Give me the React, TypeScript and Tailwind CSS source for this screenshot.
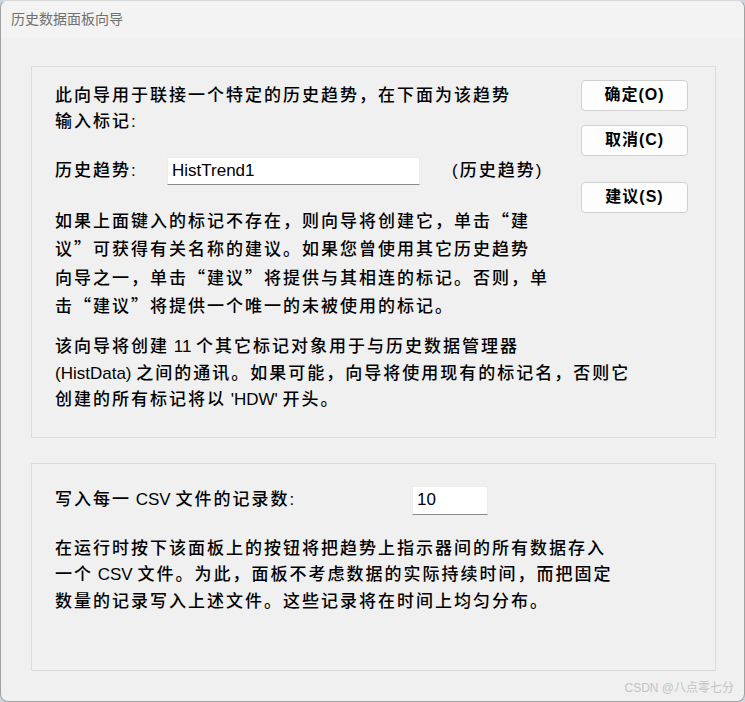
import type { ReactNode } from 'react'

const font = "font-['Liberation_Sans','Noto_Sans_CJK_SC',sans-serif]"

// latin runs sit tighter than the CJK glyphs around them
function L({ children }: { children: ReactNode }) {
  return <span className="tracking-[0px]">{children}</span>
}

// full-width quote marks come from the CJK face
function Q({ children }: { children: ReactNode }) {
  return <span className="font-['Noto_Sans_CJK_SC',sans-serif]">{children}</span>
}

function DlgButton({ label, className = '' }: { label: string; className?: string }) {
  return (
    <button
      className={`w-[107px] h-[31px] rounded-[4px] border border-[#d0d0d0] bg-[#fdfdfd] text-[16px] font-semibold text-black tracking-[1px] ${className}`}
    >
      {label}
    </button>
  )
}

function TextBox({ value, className = '' }: { value: string; className?: string }) {
  return (
    <div
      className={`bg-white border border-[#ececec] border-b-[#8a8a8a] flex items-center pl-[4px] text-[17px] tracking-[0px] text-black ${className}`}
    >
      {value}
    </div>
  )
}

export default function App() {
  return (
    <div className={`w-[745px] h-[702px] bg-[#cdd6df] ${font}`}>
      <div className="relative w-full h-full flex flex-col bg-[#f0f0f0] rounded-[8px] border border-[#a0a0a0] border-t-[#d8d8d8] overflow-hidden">
        {/* title bar */}
        <div className="h-[37px] shrink-0 bg-[#f3f3f3] flex items-center pl-[10px] text-[14px] text-[#707070]">
          历史数据面板向导
        </div>

        <div className="flex flex-col pl-[30px] pr-[28px] pt-[28px] gap-[25px] text-[17px] font-medium text-black tracking-[2px] leading-[26.4px]">
          {/* trend group */}
          <div className="h-[372px] border border-[#dcdcdc] pl-[23px] pr-[26px] pt-[13px]">
            <div className="flex items-start">
              <div className="w-[526px] pt-[3px]">
                <p>
                  此向导用于联接一个特定的历史趋势，在下面为该趋势
                  <br />
                  输入标记:
                </p>
                <div className="flex items-center mt-[21px] h-[28px]">
                  <span className="w-[112px]">历史趋势:</span>
                  <TextBox value="HistTrend1" className="w-[253px] h-[28px]" />
                  <span className="ml-[32px]">(历史趋势)</span>
                </div>
                <p className="mt-[22px]">
                  如果上面键入的标记不存在，则向导将创建它，单击<Q>“</Q>建
                  <br />
                  议<Q>”</Q>可获得有关名称的建议。如果您曾使用其它历史趋势
                  <br />
                  向导之一，单击<Q>“</Q>建议<Q>”</Q>将提供与其相连的标记。否则，单
                  <br />
                  击<Q>“</Q>建议<Q>”</Q>将提供一个唯一的未被使用的标记。
                </p>
              </div>
              <div className="flex flex-col">
                <DlgButton label="确定(O)" />
                <DlgButton label="取消(C)" className="mt-[14px]" />
                <DlgButton label="建议(S)" className="mt-[26px]" />
              </div>
            </div>
            <p className="mt-[14px]">
              该向导将创建<L> 11 </L>个其它标记对象用于与历史数据管理器
              <br />
              <L>(HistData) </L>之间的通讯。如果可能，向导将使用现有的标记名，否则它
              <br />
              创建的所有标记将以<L> 'HDW' </L>开头。
            </p>
          </div>

          {/* csv group */}
          <div className="h-[208px] border border-[#dcdcdc] pl-[23px] pt-[22px]">
            <div className="flex items-center h-[29px]">
              <span className="w-[357px]">
                写入每一<L> CSV </L>文件的记录数:
              </span>
              <TextBox value="10" className="w-[76px] h-[29px]" />
            </div>
            <p className="mt-[21px]">
              在运行时按下该面板上的按钮将把趋势上指示器间的所有数据存入
              <br />
              一个<L> CSV </L>文件。为此，面板不考虑数据的实际持续时间，而把固定
              <br />
              数量的记录写入上述文件。这些记录将在时间上均匀分布。
            </p>
          </div>
        </div>

        <span className="absolute right-[10px] bottom-[4px] text-[12px] text-[#c4c4c4]">
          CSDN @八点零七分
        </span>
      </div>
    </div>
  )
}
